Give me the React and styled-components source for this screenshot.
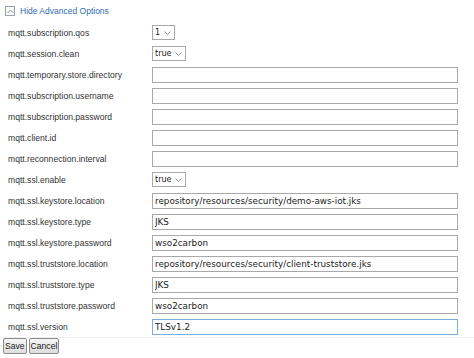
import React from "react";
import styled, { createGlobalStyle } from "styled-components";

const GlobalStyle = createGlobalStyle`
  html, body {
    margin: 0;
    padding: 0;
    background: #ffffff;
  }
  body {
    font-family: "Liberation Sans", Arial, sans-serif;
    font-size: 8.6px;
    color: #333;
  }
`;

const Page = styled.div`
  width: 474px;
  height: 358px;
  overflow: hidden;
  display: flex;
  flex-direction: column;
`;

const Toggle = styled.div`
  display: flex;
  align-items: center;
  gap: 5px;
  padding: 5px 0 0 5px;
  height: 12px;
  color: #2f6db5;
  font-size: 8.5px;
`;

const ToggleIcon = styled.span`
  width: 10px;
  height: 10px;
  border: 1px solid #9aa3ad;
  display: flex;
  align-items: center;
  justify-content: center;
  box-sizing: border-box;
`;

const Form = styled.div`
  display: flex;
  flex-direction: column;
  padding: 5px 0 0 0;
`;

const Row = styled.div`
  display: grid;
  grid-template-columns: 152px 306px;
  align-items: center;
  height: 21px;
`;

const Label = styled.span`
  padding-left: 8px;
  color: #333;
`;

const Input = styled.input`
  box-sizing: border-box;
  width: 306px;
  height: 16px;
  margin: 0;
  padding: 0 2px;
  font-family: "DejaVu Sans", Verdana, sans-serif;
  font-size: 8.8px;
  color: #222;
  border: 1px solid ${(p) => (p.$focused ? "#7aaee0" : "#a9a9a9")};
  outline: none;
  background: #fff;
`;

const Select = styled.div`
  box-sizing: border-box;
  width: ${(p) => p.$w}px;
  height: 15px;
  border: 1px solid #a9a9a9;
  display: flex;
  align-items: center;
  justify-content: space-between;
  padding: 0 3px 0 2px;
  font-family: "DejaVu Sans", Verdana, sans-serif;
  font-size: 8px;
  color: #222;
`;

const Footer = styled.div`
  border-top: 1px solid #efefef;
  padding: 0 0 0 3px;
  display: flex;
  gap: 2px;
`;

const Button = styled.button`
  height: 16px;
  padding: 0 1px;
  margin: 0;
  font-family: "Liberation Sans", Arial, sans-serif;
  font-size: 8.6px;
  color: #222;
  background: linear-gradient(#f6f6f6, #dddddd);
  border: 1px solid #8c8c8c;
  border-radius: 2px;
`;

const Chevron = () => (
  <svg width="7" height="5" viewBox="0 0 7 5">
    <path d="M0.5 4 L3.5 1 L6.5 4" fill="none" stroke="#8a8a8a" strokeWidth="1" />
  </svg>
);

const Caret = () => (
  <svg width="7" height="4" viewBox="0 0 7 4">
    <path d="M0.5 0.5 L3.5 3.5 L6.5 0.5" fill="none" stroke="#888" strokeWidth="0.9" />
  </svg>
);

const rows = [
  { label: "mqtt.subscription.qos", select: "1", w: 23 },
  { label: "mqtt.session.clean", select: "true", w: 34 },
  { label: "mqtt.temporary.store.directory", value: "" },
  { label: "mqtt.subscription.username", value: "" },
  { label: "mqtt.subscription.password", value: "" },
  { label: "mqtt.client.id", value: "" },
  { label: "mqtt.reconnection.interval", value: "" },
  { label: "mqtt.ssl.enable", select: "true", w: 34 },
  { label: "mqtt.ssl.keystore.location", value: "repository/resources/security/demo-aws-iot.jks" },
  { label: "mqtt.ssl.keystore.type", value: "JKS" },
  { label: "mqtt.ssl.keystore.password", value: "wso2carbon" },
  { label: "mqtt.ssl.truststore.location", value: "repository/resources/security/client-truststore.jks" },
  { label: "mqtt.ssl.truststore.type", value: "JKS" },
  { label: "mqtt.ssl.truststore.password", value: "wso2carbon" },
  { label: "mqtt.ssl.version", value: "TLSv1.2", focused: true },
];

export default function App() {
  return (
    <Page>
      <GlobalStyle />
      <Toggle>
        <ToggleIcon>
          <Chevron />
        </ToggleIcon>
        Hide Advanced Options
      </Toggle>
      <Form>
        {rows.map((r) => (
          <Row key={r.label}>
            <Label>{r.label}</Label>
            {r.select ? (
              <Select $w={r.w}>
                <span>{r.select}</span>
                <Caret />
              </Select>
            ) : (
              <Input defaultValue={r.value} $focused={r.focused} readOnly />
            )}
          </Row>
        ))}
      </Form>
      <Footer>
        <Button>Save</Button>
        <Button>Cancel</Button>
      </Footer>
    </Page>
  );
}
